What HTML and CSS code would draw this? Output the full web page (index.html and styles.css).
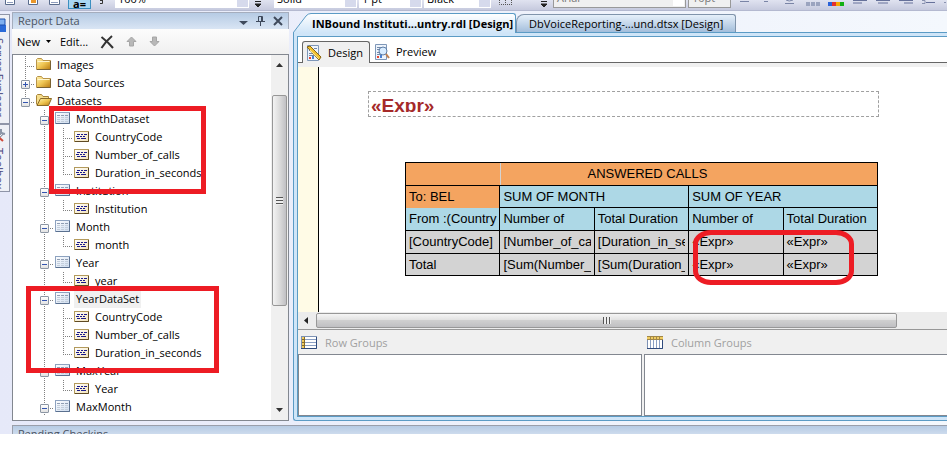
FILE: index.html
```html
<!DOCTYPE html>
<html lang="en">
<head>
  <meta charset="UTF-8">
  <title>Report Designer</title>
  <link rel="stylesheet" href="styles.css">
</head>
<body>
  <svg class="sprite" aria-hidden="true">
    <defs>
      <linearGradient id="gold" x1="0" y1="0" x2="1" y2="1">
        <stop offset="0" stop-color="#fdf0b0"/>
        <stop offset="0.5" stop-color="#efc653"/>
        <stop offset="1" stop-color="#b97a10"/>
      </linearGradient>
      <linearGradient id="sheet" x1="0" y1="0" x2="1" y2="1">
        <stop offset="0" stop-color="#ffffff"/>
        <stop offset="1" stop-color="#cddcf0"/>
      </linearGradient>
      <linearGradient id="cream" x1="0" y1="0" x2="1" y2="1">
        <stop offset="0" stop-color="#ffffff"/>
        <stop offset="1" stop-color="#f3e3b8"/>
      </linearGradient>
      <linearGradient id="slope" x1="0" y1="0" x2="0" y2="1">
        <stop offset="0" stop-color="#ffffff"/>
        <stop offset="1" stop-color="#cfe5f8"/>
      </linearGradient>
    </defs>
    <symbol id="folder" viewBox="0 0 16 16">
      <path d="M.5 13.500V3.500L1.500 2.500H5.500L7 4.500H14.500V13.500Z" fill="url(#gold)" stroke="#b8944a"/>
      <path d="M1.500 5.500H13.500" stroke="#fff6cf"/>
      <path d="M1 13.500H14.500V5" fill="none" stroke="#7a6232"/>
    </symbol>
    <symbol id="folder-open" viewBox="0 0 16 16">
      <path d="M.5 12.500V3.500L1.500 2.500H5.500L7 4.500H12.500V7" fill="#f6de8c" stroke="#a8843a"/>
      <path d="M1 13.500L4.500 6.500H15.500L12.500 13.500Z" fill="url(#gold)" stroke="#8a6a28"/>
    </symbol>
    <symbol id="dataset" viewBox="0 0 16 16">
      <rect x=".5" y="2.500" width="14" height="11" fill="url(#sheet)" stroke="#8da2bf"/>
      <path d="M1 13.500H14.500V3" fill="none" stroke="#5a708f"/>
      <path d="M2 5.500H13" stroke="#8f9db3" stroke-dasharray="3 1"/>
      <path d="M2 7.500H13M2 9.500H13M2 11.500H13" stroke="#c3cedb" stroke-dasharray="3 1"/>
    </symbol>
    <symbol id="field" viewBox="0 0 16 16">
      <rect x=".5" y="3.500" width="14" height="10" fill="url(#cream)" stroke="#b39a5c"/>
      <path d="M1 13.500H14.500V4" fill="none" stroke="#5f4a24"/>
      <path d="M3 6.500H6M7 6.500H9M10 6.500H13M2 8.500H5M6 8.500H8M9 8.500H11M3 10.500H6M7 10.500H12" stroke="#1a1a8c"/>
    </symbol>
    <symbol id="report" viewBox="0 0 16 16">
      <path d="M1.500 .5H12.500V15.500H1.500Z" fill="#eef4fc" stroke="#7e97b8"/>
      <path d="M3 3.500H7M3 5.500H6M8 3.500H11M3 8.500H9M3 10.500H8" stroke="#7389a8"/>
      <path d="M3 12h2v2H3z" fill="#e8432e"/>
      <path d="M6 11h2v3H6z" fill="#4a7fd0"/>
    </symbol>
  </svg>

  <div class="app">
    <div class="toolbar">
      <div class="tools">
        <svg width="60" height="10" viewBox="0 0 60 10">
          <path d="M5.500 0V4.500H14.500V0M49.500 0V4.500H59.500V0" fill="#fff" stroke="#5a6c8c"/>
          <path d="M7 2.500H13M51 2.500H58" stroke="#8f9dbd"/>
          <path d="M28.500 0V4.500H37.500V0" fill="#fff" stroke="#5a6c8c"/>
          <path d="M31 0H36V3H31Z" fill="#e9962a"/>
        </svg>
        <button class="tool-active" aria-label="Expression">a=</button>
        <svg width="8" height="10" viewBox="0 0 8 10"><path d="M1 .5H4M3.500 0V3.500H1" fill="none" stroke="#333"/></svg>
      </div>
      <div class="combo zoom-combo"><span>100%</span><i></i></div>
      <svg class="overflow" width="10" height="10" viewBox="0 0 10 10"><path d="M2 1.500H8M2 4L8 4L5 7Z" stroke="#222" fill="#222"/></svg>
      <div class="combo line-combo"><span>Solid</span><i></i></div>
      <div class="combo width-combo"><span>1 pt</span><i></i></div>
      <div class="combo color-combo"><span>Black</span><i></i></div>
      <svg class="borders" width="14" height="10" viewBox="0 0 14 10"><path d="M.5 0V4.500H13M6.500 0V4M12.500 0V4" fill="none" stroke="#555" stroke-dasharray="1 1"/></svg>
      <svg class="overflow" width="10" height="10" viewBox="0 0 10 10"><path d="M2 1.500H8M2 4L8 4L5 7Z" stroke="#222" fill="#222"/></svg>
      <div class="combo font-combo"><span>Arial</span><i></i></div>
      <div class="combo size-combo"><span>10pt</span></div>
      <svg width="220" height="10" viewBox="0 0 220 10">
        <path d="M7 1.500H16M31 1.500H35M53 0Q56 2 60 0M52 3.500H61" fill="none" stroke="#7a85a6"/>
        <path d="M73 2h4v4h-4zM78 2h4v4h-4zM83 2h4v4h-4z" fill="#9ba4bf"/>
        <path d="M95 2h4v4h-4z" fill="#2a62d8"/><path d="M99 2h4v4h-4z" fill="#e33030"/>
        <path d="M103 2h4v4h-4z" fill="#f5a800"/><path d="M107 2h4v4h-4z" fill="#12b012"/>
        <path d="M120 .5H134M120 3H129M143 .5H157M145 3H155M166 .5H180M171 3H180M193 2.500H202M214 2.500H220" stroke="#66719a"/>
        <path d="M189 .5H192V3.500H189M211 2.500H213" fill="none" stroke="#8a93b0"/>
      </svg>
    </div>

    <div class="workspace">
      <nav class="rail">
        <button class="rail-tab server">
          <svg width="16" height="16" viewBox="0 0 16 16"><path d="M1 3H7V9H1ZM8 7H15V14H8Z" fill="#2a6ad8"/><path d="M7 1H14V7H7Z" fill="#7fb0f0" stroke="#1d4fae"/></svg>
          <span>Server Explorer</span>
        </button>
        <button class="rail-tab">
          <svg width="16" height="16" viewBox="0 0 16 16"><path d="M3 14L12 5" stroke="#8c96a8" stroke-width="3"/><path d="M3 14L12 5" stroke="#f2f4f8"/><path d="M10 1V5L14 6" fill="none" stroke="#8c96a8" stroke-width="2"/><path d="M3 5L12 13" stroke="#d04a3a" stroke-width="2"/></svg>
          <span>Toolbox</span>
        </button>
      </nav>

      <section class="report-data">
        <header class="panel-title">
          <span>Report Data</span>
          <div class="panel-buttons">
            <button aria-label="Window position"><svg width="9" height="12" viewBox="0 0 9 12"><path d="M0 6H9L4.500 10Z" fill="#3f4a5c"/></svg></button>
            <button aria-label="Auto hide"><svg width="9" height="12" viewBox="0 0 9 12"><path d="M2.500 1.500H6.500V6.500M2.500 1.500V6.500M5.500 2V6M0 6.500H9M4.500 7V11" fill="none" stroke="#3f4a5c"/></svg></button>
            <button aria-label="Close"><svg width="10" height="12" viewBox="0 0 10 12"><path d="M1 2L9 10M9 2L1 10" stroke="#3f4a5c" stroke-width="2"/></svg></button>
          </div>
        </header>
        <div class="panel-tools">
          <button class="menu">New <svg width="5" height="3" viewBox="0 0 5 3"><path d="M0 0H5L2.500 3Z"/></svg></button>
          <button class="edit">Edit...</button>
          <button aria-label="Delete"><svg width="14" height="14" viewBox="0 0 14 14"><path d="M1.500 2Q8 7 13 13M12 1Q6 6 1.500 13" fill="none" stroke="#333" stroke-width="2"/></svg></button>
          <button aria-label="Move up" disabled><svg width="11" height="11" viewBox="0 0 11 11"><path d="M5.500 1L10 5.500H7.500V10H3.500V5.500H1Z" fill="#b8b8b8" stroke="#a6a6a6"/></svg></button>
          <button aria-label="Move down" disabled><svg width="11" height="11" viewBox="0 0 11 11"><path d="M5.500 10L10 5.500H7.500V1H3.500V5.500H1Z" fill="#b8b8b8" stroke="#a6a6a6"/></svg></button>
        </div>
        <div class="tree-box">
          <ul class="tree">
            <li><i class="guide tee"></i><svg class="icon"><use href="#folder"/></svg><span>Images</span></li>
            <li><i class="guide tee"><button class="toggle plus" aria-label="Expand"></button></i><svg class="icon"><use href="#folder"/></svg><span>Data Sources</span></li>
            <li><i class="guide elbow"><button class="toggle" aria-label="Collapse"></button></i><svg class="icon"><use href="#folder-open"/></svg><span>Datasets</span></li>
            <li><i class="guide"></i><i class="guide tee"><button class="toggle" aria-label="Collapse"></button></i><svg class="icon"><use href="#dataset"/></svg><span>MonthDataset</span></li>
            <li><i class="guide"></i><i class="guide line"></i><i class="guide tee"></i><svg class="icon"><use href="#field"/></svg><span>CountryCode</span></li>
            <li><i class="guide"></i><i class="guide line"></i><i class="guide tee"></i><svg class="icon"><use href="#field"/></svg><span>Number_of_calls</span></li>
            <li><i class="guide"></i><i class="guide line"></i><i class="guide elbow"></i><svg class="icon"><use href="#field"/></svg><span>Duration_in_seconds</span></li>
            <li><i class="guide"></i><i class="guide tee"><button class="toggle" aria-label="Collapse"></button></i><svg class="icon"><use href="#dataset"/></svg><span>Institution</span></li>
            <li><i class="guide"></i><i class="guide line"></i><i class="guide elbow"></i><svg class="icon"><use href="#field"/></svg><span>Institution</span></li>
            <li><i class="guide"></i><i class="guide tee"><button class="toggle" aria-label="Collapse"></button></i><svg class="icon"><use href="#dataset"/></svg><span>Month</span></li>
            <li><i class="guide"></i><i class="guide line"></i><i class="guide elbow"></i><svg class="icon"><use href="#field"/></svg><span>month</span></li>
            <li><i class="guide"></i><i class="guide tee"><button class="toggle" aria-label="Collapse"></button></i><svg class="icon"><use href="#dataset"/></svg><span>Year</span></li>
            <li><i class="guide"></i><i class="guide line"></i><i class="guide elbow"></i><svg class="icon"><use href="#field"/></svg><span>year</span></li>
            <li><i class="guide"></i><i class="guide tee"><button class="toggle" aria-label="Collapse"></button></i><svg class="icon"><use href="#dataset"/></svg><span class="selected">YearDataSet</span></li>
            <li><i class="guide"></i><i class="guide line"></i><i class="guide tee"></i><svg class="icon"><use href="#field"/></svg><span>CountryCode</span></li>
            <li><i class="guide"></i><i class="guide line"></i><i class="guide tee"></i><svg class="icon"><use href="#field"/></svg><span>Number_of_calls</span></li>
            <li><i class="guide"></i><i class="guide line"></i><i class="guide elbow"></i><svg class="icon"><use href="#field"/></svg><span>Duration_in_seconds</span></li>
            <li><i class="guide"></i><i class="guide tee"><button class="toggle" aria-label="Collapse"></button></i><svg class="icon"><use href="#dataset"/></svg><span>MaxYear</span></li>
            <li><i class="guide"></i><i class="guide line"></i><i class="guide elbow"></i><svg class="icon"><use href="#field"/></svg><span>Year</span></li>
            <li><i class="guide"></i><i class="guide tee"><button class="toggle" aria-label="Collapse"></button></i><svg class="icon"><use href="#dataset"/></svg><span>MaxMonth</span></li>
          </ul>
          <div class="vscroll">
            <svg width="15" height="18" viewBox="0 0 15 18"><path d="M4 11H11L7.500 7Z" fill="#333"/></svg>
            <div class="vthumb"><i></i></div>
            <svg width="15" height="18" viewBox="0 0 15 18"><path d="M4 7H11L7.500 11Z" fill="#333"/></svg>
          </div>
          <div class="mark mark-month"></div>
          <div class="mark mark-year"></div>
        </div>
      </section>

      <main class="document">
        <div class="doc-tabs">
          <svg class="slope" width="18" height="20" viewBox="0 0 18 20"><path d="M0 20L13 3Q15 .5 18 .5V20Z" fill="url(#slope)"/><path d="M0 20L13 3Q15 .5 18 .5" fill="none" stroke="#5b9bc5"/></svg>
          <button class="doc-tab active">INBound Instituti...untry.rdl [Design]</button>
          <button class="doc-tab">DbVoiceReporting-...und.dtsx [Design]</button>
        </div>
        <div class="frame">
          <div class="frame-inner">
            <div class="view-tabs">
              <button class="view-tab active">
                <svg width="16" height="16" viewBox="0 0 16 16"><use href="#report"/><path d="M1 2L4 1L15 12L13 15Z" fill="#f1c232" stroke="#8a6410"/><path d="M4 5L13 14" stroke="#fbe58c"/></svg>
                Design
              </button>
              <button class="view-tab">
                <svg width="16" height="16" viewBox="0 0 16 16"><use href="#report"/><circle cx="9" cy="7" r="4" fill="#d8ecff" stroke="#5f7ea6"/><path d="M12 10L15 14" stroke="#c08050" stroke-width="2"/></svg>
                Preview
              </button>
            </div>
            <div class="surface">
              <div class="ruler"></div>
              <div class="canvas">
                <div class="textbox"><div>«Expr»</div></div>
                <div class="tablix">
                  <table>
                    <colgroup><col><col><col><col><col></colgroup>
                    <tr class="title"><td colspan="5">ANSWERED CALLS</td></tr>
                    <tr class="sums"><td class="to">To: BEL</td><td colspan="2">SUM OF MONTH</td><td colspan="2">SUM OF YEAR</td></tr>
                    <tr class="heads"><td class="from">From :(Country</td><td>Number of</td><td>Total Duration</td><td>Number of</td><td>Total Duration</td></tr>
                    <tr><td>[CountryCode]</td><td><div>[Number_of_calls]</div></td><td><div>[Duration_in_seconds]</div></td><td>«Expr»</td><td>«Expr»</td></tr>
                    <tr class="total"><td>Total</td><td><div>[Sum(Number_of_calls)]</div></td><td><div>[Sum(Duration_in_seconds)]</div></td><td>«Expr»</td><td>«Expr»</td></tr>
                  </table>
                  <div class="mark mark-expr"></div>
                </div>
              </div>
            </div>
            <div class="hscroll">
              <svg width="18" height="15" viewBox="0 0 18 15"><path d="M10 4V11L6 7.500Z" fill="#222"/></svg>
              <div class="hthumb"><i></i></div>
            </div>
            <div class="groups">
              <section class="group">
                <h2><svg width="16" height="14" viewBox="0 0 16 14"><rect x=".5" y=".5" width="15" height="12" fill="#fff" stroke="#7d92b5"/><path d="M0 12.500H15.500V1" fill="none" stroke="#2f4a7c"/><path d="M4 3.500H15M4 6.500H15M4 9.500H15" stroke="#8ba0c4"/><path d="M1 1H3V12H1Z" fill="#f0cc60"/><path d="M1 3.500H3M1 6.500H3M1 9.500H3M3.500 1V12" stroke="#866a28"/></svg>Row Groups</h2>
                <div class="group-box"></div>
              </section>
              <section class="group">
                <h2><svg width="16" height="14" viewBox="0 0 16 14"><rect x=".5" y=".5" width="15" height="12" fill="#fff" stroke="#7d92b5"/><path d="M0 12.500H15.500V1" fill="none" stroke="#2f4a7c"/><path d="M3.500 4V12M6.500 4V12M9.500 4V12M12.500 4V12" stroke="#8ba0c4"/><path d="M0 0H16V4H0Z" fill="#f0cc60"/><path d="M0 .5H16M0 3.500H16M3.500 1V4M6.500 1V4M9.500 1V4M12.500 1V4" stroke="#a08648"/></svg>Column Groups</h2>
                <div class="group-box"></div>
              </section>
            </div>
          </div>
        </div>
      </main>
    </div>

    <div class="pending">Pending Checkins</div>
  </div>
</body>
</html>
```

FILE: styles.css
```css
* {
  box-sizing: border-box;
}
body {
  margin: 0;
  background: #fff;
  color: #000;
  font: 11px/18px "Open Sans", "Noto Sans", sans-serif;
}
button {
  margin: 0;
  padding: 0;
  border: 0;
  background: none;
  color: inherit;
  font: inherit;
}
svg {
  display: block;
  flex: none;
}
.sprite {
  position: absolute;
  width: 0;
  height: 0;
}
.app {
  background: linear-gradient(90deg, #e6e9f9, #f4f8fd);
  overflow: hidden;
}

/* toolbar */
.toolbar {
  display: flex;
  height: 11px;
  overflow: hidden;
  background: linear-gradient(#e0e3f0, #c6cade);
  border-bottom: 1px solid #b4b9d0;
}
.toolbar > * {
  flex: none;
}
.tools {
  display: flex;
  gap: 8px;
  width: 115px;
}
.tool-active {
  width: 23px;
  height: 9px;
  border: 1px solid #3c8fc0;
  border-top: 0;
  background: #a9d7f2;
  font-weight: bold;
  line-height: 0;
}
.combo {
  display: flex;
  justify-content: space-between;
  align-items: flex-end;
  height: 8px;
  padding: 0 1px 1px 3px;
  background: #fff;
  line-height: 14px;
}
.combo span {
  margin-bottom: 1px;
}
.combo i {
  width: 11px;
  height: 7px;
  background: #d6daec;
}
.overflow {
  margin: 0 4px;
}
.zoom-combo {
  width: 134px;
}
.line-combo {
  width: 83px;
  margin-left: 7px;
}
.width-combo {
  width: 63px;
  margin: 0 2px;
}
.color-combo {
  width: 67px;
}
.borders {
  margin: 0 22px 0 8px;
}
.font-combo, .size-combo {
  border: 1px solid #999;
  border-top: 0;
  background: #f0f0f0;
  color: #777;
}
.font-combo {
  width: 133px;
  margin-left: 0;
}
.font-combo i {
  background: #fff;
}
.size-combo {
  width: 43px;
  margin: 0 2px;
}

/* docked tabs */
.workspace {
  display: flex;
  padding-top: 1px;
}
.rail {
  flex: none;
  width: 12px;
  padding-top: 2px;
}
.rail-tab {
  display: flex;
  flex-direction: column;
  align-items: flex-end;
  gap: 4px;
  width: 10px;
  height: 68px;
  padding: 3px 2px 0 0;
  overflow: hidden;
  border: 1px solid #8f95a8;
  border-left: 0;
  background: #eef0f6;
  color: #44447a;
}
.rail-tab.server {
  height: 110px;
}
.rail-tab span {
  margin-right: 2px;
  line-height: 12px;
  writing-mode: vertical-rl;
  white-space: nowrap;
}

/* report data */
.report-data {
  flex: none;
  width: 277px;
}
.panel-title {
  display: flex;
  align-items: center;
  justify-content: space-between;
  height: 17px;
  padding: 0 5px;
  border: 1px solid #a5adbd;
  border-bottom: 0;
  background: linear-gradient(#b6cbe4, #d9e5f4);
  color: #4a5362;
}
.panel-buttons {
  display: flex;
  gap: 8px;
}
.panel-tools {
  display: flex;
  align-items: center;
  gap: 12px;
  height: 25px;
  padding-left: 5px;
  background: linear-gradient(#fcfcfc, #f0f0f0);
}
.menu {
  display: flex;
  align-items: center;
  gap: 6px;
}
.edit {
  margin-left: -3px;
}
.tree-box {
  position: relative;
  display: flex;
  border: 1px solid #828790;
  background: #fff;
}
.tree {
  flex: 1;
  margin: 0;
  padding: 1px 0 4px 3px;
  list-style: none;
}
.tree li {
  display: flex;
  height: 18px;
}
.tree span {
  padding: 0 2px;
  margin-left: 3px;
}
.tree .selected {
  background: #f0f0f0;
}
.icon {
  width: 16px;
  height: 16px;
  margin-left: 1px;
}
.guide {
  flex: none;
  display: flex;
  justify-content: center;
  align-items: center;
  width: 19px;
  padding-top: 2px;
  background-repeat: no-repeat;
}
.line {
  background-image: repeating-linear-gradient(#808080 0 1px, transparent 1px 2px);
  background-size: 1px 100%;
  background-position: 9px 0;
}
.tee, .elbow {
  background-image:
    repeating-linear-gradient(#808080 0 1px, transparent 1px 2px),
    repeating-linear-gradient(90deg, #808080 0 1px, transparent 1px 2px);
  background-size: 1px 100%, 10px 1px;
  background-position: 9px 0, 9px 10px;
}
.elbow {
  background-size: 1px 10px, 10px 1px;
}
.toggle {
  width: 9px;
  height: 9px;
  border: 1px solid #8c96a4;
  border-radius: 1px;
  background:
    linear-gradient(#3455b0, #3455b0) center / 5px 1px no-repeat,
    linear-gradient(#fff, #e2e2e2);
}
.toggle.plus {
  background:
    linear-gradient(#3455b0, #3455b0) center / 5px 1px no-repeat,
    linear-gradient(#3455b0, #3455b0) center / 1px 5px no-repeat,
    linear-gradient(#fff, #e2e2e2);
}
.vscroll {
  display: flex;
  flex-direction: column;
  width: 17px;
  padding: 1px;
  background: #f0f0f0;
}
.vthumb {
  display: flex;
  align-items: center;
  justify-content: center;
  height: 211px;
  margin: 21px 0 auto;
  border: 1px solid #979797;
  border-radius: 2px;
  background: linear-gradient(90deg, #f3f3f3, #dcdcdc 50%, #c0c0c4);
}
.vthumb i {
  width: 7px;
  height: 8px;
  background: repeating-linear-gradient(#555 0 1px, #eee 1px 3px);
}

/* highlights */
.mark {
  position: absolute;
  border: 5px solid #ed1c24;
  pointer-events: none;
}
.mark-month {
  left: 36px;
  top: 51px;
  width: 157px;
  height: 88px;
}
.mark-year {
  left: 13px;
  top: 231px;
  width: 193px;
  height: 87px;
}
.mark-expr {
  left: 288px;
  top: 68px;
  width: 161px;
  height: 55px;
  border-radius: 18px / 14px;
}

/* document */
.document {
  flex: 1;
  display: flex;
  flex-direction: column;
  min-width: 0;
  padding-top: 1px;
  margin-left: 4px;
}
.doc-tabs {
  position: relative;
  display: flex;
  align-items: flex-end;
  margin-bottom: -1px;
}
.doc-tab {
  height: 18px;
  margin-bottom: 1px;
  padding: 0 12px;
  border: 1px solid #8094ab;
  border-bottom: 0;
  border-radius: 8px 3px 0 0;
  background: linear-gradient(#e6f0fa, #a3bedb);
  white-space: nowrap;
}
.doc-tab.active {
  height: 20px;
  margin: 0;
  padding: 0 2px 0 1px;
  border-color: #5b9bc5;
  border-left: 0;
  border-radius: 0 3px 0 0;
  background: linear-gradient(#fff, #cfe5f8);
  font-weight: bold;
}
.frame {
  flex: 1;
  display: flex;
  padding: 3px 0 3px 3px;
  border: 1px solid #5b9bc5;
  border-right: 0;
  border-radius: 0 0 0 3px;
  background: #cfe5f8;
}
.frame-inner {
  flex: 1;
  display: flex;
  flex-direction: column;
  min-width: 0;
  border: 1px solid #5b9bc5;
  border-right: 0;
  background: #f0f0f0;
}
.view-tabs {
  display: flex;
  align-items: flex-end;
  height: 26px;
  padding-left: 4px;
  border-bottom: 1px solid #666;
  background: #fff;
}
.view-tab {
  display: flex;
  align-items: center;
  gap: 6px;
  height: 21px;
  padding: 0 4px;
}
.view-tab.active {
  height: 22px;
  margin-bottom: -1px;
  padding: 0 6px 0 3px;
  border: 1px solid #666;
  border-bottom: 0;
  border-radius: 3px 3px 0 0;
  background: #f0f0f0;
}
.surface {
  flex: 1;
  display: flex;
  margin-top: 4px;
  background: #fff;
}
.ruler {
  width: 21px;
  border-right: 1px solid #000;
  background: #fffbe6;
}
.canvas {
  flex: 1;
  padding: 24px 0 0 49px;
  font-family: "Liberation Sans", Arial, sans-serif;
}
.textbox {
  width: 511px;
  height: 26px;
  padding: 2px;
  border: 1px dashed #a0a0a0;
}
.textbox div {
  height: 18px;
  overflow: hidden;
  color: #a52a2a;
  font-size: 19px;
  font-weight: bold;
  line-height: 24px;
}
.tablix {
  position: relative;
  width: 473px;
  margin: 45px 0 0 37px;
}
.tablix table {
  width: 100%;
  table-layout: fixed;
  border-collapse: collapse;
  background: #d3d3d3;
  font-size: 13px;
  line-height: 20px;
}
.tablix td {
  height: 23px;
  padding: 0 0 0 3px;
  border: 1px solid #000;
  white-space: nowrap;
}
.tablix .sums td, .tablix .total td {
  height: 22px;
}
.tablix td div {
  margin-right: 3px;
  overflow: hidden;
}
/* the merged title keeps the faint edge of the first column */
.tablix .title td {
  padding-left: 12px;
  background: linear-gradient(#d3d3d3, #d3d3d3) 20% 0 / 1px 100% no-repeat #f4a460;
  text-align: center;
}
.sums td, .heads td {
  background: #add8e6;
}
.sums .to {
  border-bottom: 0;
  background: #f4a460;
}
.heads .from {
  border-top: 0;
}
.hscroll {
  display: flex;
  padding: 1px 0;
  border-bottom: 1px solid #979797;
  background: #ececec;
}
.hthumb {
  display: flex;
  align-items: center;
  justify-content: center;
  width: 92%;
  height: 15px;
  margin-right: 50px;
  border: 1px solid #979797;
  border-radius: 2px;
  background: linear-gradient(#f5f5f5, #e2e2e2 45%, #cfcfcf 50%, #bfbfc2);
}
.hthumb i {
  width: 8px;
  height: 7px;
  background: repeating-linear-gradient(90deg, #555 0 1px, #eee 1px 3px);
}
.groups {
  display: flex;
  gap: 2px;
}
.group {
  flex: 1;
}
.group:first-child {
  flex: 0 1 53%;
}
.group h2 {
  display: flex;
  align-items: center;
  gap: 8px;
  height: 24px;
  margin: 0;
  padding: 2px 3px 0;
  color: #a0a0a0;
  font-size: 11px;
  font-weight: normal;
}
.group-box {
  height: 62px;
  border: 1px solid #828790;
  background: #fff;
}
.group:last-child .group-box {
  border-right: 0;
}

.pending {
  height: 9px;
  margin: 4px 0 0 12px;
  padding-left: 5px;
  overflow: hidden;
  border: 1px solid #9a9fab;
  border-width: 1px 0 0 1px;
  background: linear-gradient(#b6cbe4, #cddbed);
  color: #4a5362;
  line-height: 16px;
}
```
